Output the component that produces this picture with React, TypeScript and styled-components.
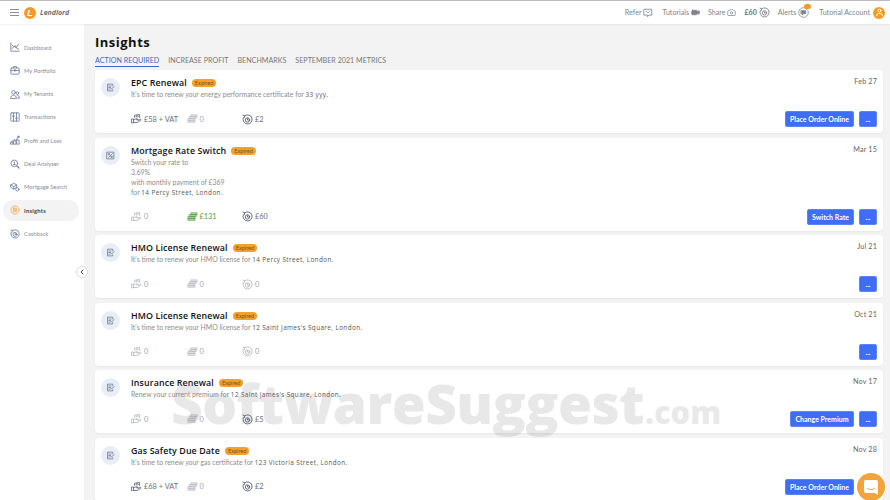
import React from "react";
import styled, { createGlobalStyle } from "styled-components";
import { Video, Camera, ChevronLeft, User } from "lucide-react";

const Global = createGlobalStyle`
  html, body { margin: 0; padding: 0; height: 500px; overflow: hidden; background: #f3f3f3; }
  body { font-family: "Lato", "Liberation Sans", sans-serif; }
  * { box-sizing: border-box; }
`;

const Page = styled.div`position: relative; width: 890px; height: 500px; overflow: hidden; display: flex; flex-direction: column; background: #f3f3f3;`;
const TopBar = styled.header`
  height: 24px; flex: none; background: #fff; border-top: 1px solid #bdbdbd; display: flex; align-items: center;
  padding: 0 5px 0 10px; box-shadow: 0 1px 2px rgba(0,0,0,.06); z-index: 2; color: #767c88;
`;
const Burger = styled.span`
  width: 9px; height: 7px; margin-right: 5px; border-top: 1px solid #8a8e96; border-bottom: 1px solid #8a8e96; position: relative;
  &::after { content: ""; position: absolute; left: 0; right: 0; top: 2px; height: 1px; background: #8a8e96; }
`;
const LogoDot = styled.span`
  width: 12px; height: 12px; border-radius: 50%; background: #f59a23; color: #fff; display: flex; align-items: center; justify-content: center;
  font: italic 700 9px "Liberation Sans", sans-serif; margin-right: 4px;
`;
const LogoText = styled.span`font: italic 700 7px "Open Sans", sans-serif; color: #6e7278;`;
const TopNav = styled.nav`margin-left: auto; display: flex; align-items: center; font-size: 7.1px; color: #7f838b;`;
const TopItem = styled.span<{ $gap: number }>`display: flex; align-items: center; gap: 2px; margin-right: ${p => p.$gap}px; position: relative;`;
const Strong = styled.span`font-weight: 700; color: #6c7078;`;
const Bubble = styled.span`
  position: absolute; right: -2px; top: -3px; width: 7px; height: 5px; border-radius: 3px; background: #f59a23;
`;
const Avatar = styled.span`
  width: 12px; height: 12px; border-radius: 50%; background: #f59a23; display: flex; align-items: center; justify-content: center; color: #fff; margin-left: 1px;
`;

const Body = styled.div`flex: 1; display: flex; min-height: 0;`;
const Side = styled.aside`width: 84px; flex: none; background: #fff; padding: 12.5px 5px 0 3px; display: flex; flex-direction: column; gap: 2.33px;`;
const SideItem = styled.div<{ $active?: boolean }>`
  height: 21px; border-radius: 10px; display: flex; align-items: center; gap: 4px; padding-left: 7px; font-size: 5.8px;
  color: ${p => p.$active ? "#444" : "#868c98"}; font-weight: ${p => p.$active ? 700 : 400};
  background: ${p => p.$active ? "#f3f3f3" : "transparent"};
  letter-spacing: ${p => p.$active ? ".25px" : "0"};
  svg { color: ${p => p.$active ? "#f2a04a" : "#6c7d9e"}; flex: none; }
`;
const Collapse = styled.button`
  position: absolute; left: 76px; top: 266px; width: 12px; height: 12px; border-radius: 50%; background: #fff; border: 1px solid #ddd; padding: 0;
  display: flex; align-items: center; justify-content: center; color: #444; z-index: 3;
`;

const Main = styled.main`flex: 1; padding: 11px 7px 0 11px; min-width: 0;`;
const Title = styled.h1`margin: 0; font: 700 13px/15px "Open Sans", sans-serif; letter-spacing: .5px; color: #111; height: 15px;`;
const Tabs = styled.div`display: flex; gap: 9px; margin-top: 4.5px; height: 15.5px;`;
const Tab = styled.span<{ $active?: boolean }>`
  font-size: 7.1px; line-height: 11px; height: 12px; color: ${p => p.$active ? "#3d66c9" : "#777"}; letter-spacing: .03px;
  border-bottom: ${p => p.$active ? "1px solid #3d66c9" : "0"}; white-space: nowrap;
`;
const List = styled.div`display: flex; flex-direction: column; gap: 4.5px;`;
const Card = styled.article`
  background: #fff; border-radius: 4px; padding: 7px 6px 6px; display: grid; grid-template-columns: 19px 1fr; column-gap: 11px; flex: none;
  box-shadow: 0 1px 2px rgba(0,0,0,.05);
`;
const Round = styled.span`
  width: 19px; height: 19px; border-radius: 50%; background: #e9eef6; display: flex; align-items: center; justify-content: center; color: #65748f; margin-top: 1px;
`;
const Content = styled.div`min-width: 0;`;
const Head = styled.div`display: flex; align-items: center; height: 12px;`;
const CardTitle = styled.h2`margin: 0; font: 600 8.85px/12px "Open Sans", sans-serif; color: #111; letter-spacing: .12px; white-space: nowrap;`;
const Badge = styled.span`
  margin-left: 5px; height: 8px; padding: 0 3px; border-radius: 4px; background: #f5a02c; color: #7a5520; font-size: 5.6px; line-height: 8px;
`;
const DateText = styled.span`margin-left: auto; align-self: flex-start; font-size: 7.2px; line-height: 9px; color: #666; letter-spacing: .15px;`;
const Desc = styled.p`margin: 0; height: 10px; font-size: 6.9px; line-height: 10px; color: #8d8d8d; white-space: nowrap;`;
const Addr = styled.span`font-family: "Open Sans", sans-serif; font-size: 6.35px; line-height: 1; color: #555; letter-spacing: .4px;`;
const Foot = styled.div`display: flex; align-items: center; margin-top: 12px; height: 16px;`;
const Metrics = styled.div`display: grid; grid-template-columns: 55.5px 55.5px auto;`;
const Metric = styled.span<{ $tone: "on" | "off" | "green" }>`
  display: flex; align-items: center; gap: 2px; font-size: 7.4px;
  color: ${p => p.$tone === "green" ? "#5c9c3e" : p.$tone === "on" ? "#6c7079" : "#a4a6aa"};
  svg { color: ${p => p.$tone === "green" ? "#4f9a3c" : p.$tone === "on" ? "#5a6270" : "#b7bac0"}; }
`;
const Actions = styled.div`margin-left: auto; display: flex; gap: 5px;`;
const Btn = styled.button<{ $w: number }>`
  width: ${p => p.$w}px; height: 16px; padding: 0; border-radius: 2px; border: 1px solid #5c84f7; background: #3f6df6; color: #fff;
  font: 700 7px/14px "Lato", sans-serif; white-space: nowrap;
`;

const Watermark = styled.div`
  position: absolute; left: 171px; top: 373px; font: 800 55px/60px "Open Sans", sans-serif; color: rgba(120,120,120,.17); white-space: nowrap; letter-spacing: -.6px; pointer-events: none; z-index: 4;
`;
const Dot = styled.span`font-size: 31px; letter-spacing: 0; margin-left: 1px;`;
const Chat = styled.div`
  position: absolute; left: 857px; top: 473px; width: 28px; height: 28px; border-radius: 50%; background: #f3a33b; display: flex; align-items: center; justify-content: center; z-index: 5;
`;

type IP = { size?: number };
const Svg = ({ size = 10, w = 12, h = 12, sw = 1, children }: { size?: number; w?: number; h?: number; sw?: number; children: React.ReactNode }) => (
  <svg width={size} height={size * h / w} viewBox={`0 0 ${w} ${h}`} fill="none" stroke="currentColor" strokeWidth={sw} strokeLinecap="round" strokeLinejoin="round" aria-hidden="true">{children}</svg>
);
const IcDash = ({ size }: IP) => <Svg size={size}><path d="M1 1v10h10" /><path d="M2.5 8l2.5-3 2 2 3.5-4.5" /><path d="M2.5 4l2 1.5 2-1 1.5 3 2.5 1" /></Svg>;
const IcCase = ({ size }: IP) => <Svg size={size}><rect x="1" y="3.5" width="10" height="7.5" rx="1" /><path d="M4.2 3.5V2h3.6v1.5M1 6.5h10" /><circle cx="6" cy="6.5" r="1" /></Svg>;
const IcUsers = ({ size }: IP) => <Svg size={size}><circle cx="4.2" cy="4" r="2.2" /><path d="M.8 11c0-2.5 1.5-3.5 3.4-3.5S7.6 8.5 7.6 11z" /><circle cx="8.8" cy="5" r="1.6" /><path d="M9 8h.5c1 0 1.7.8 1.7 3H9" /></Svg>;
const IcTrans = ({ size }: IP) => <Svg size={size}><rect x="1" y="1" width="10" height="10" rx=".8" /><path d="M4.2 1v10M7.8 1v10M3 5h2.4M6.6 7.5H9" /></Svg>;
const IcPnl = ({ size }: IP) => <Svg size={size}><path d="M1.5 8.5L5 5.5l2 1 3-4" /><circle cx="10" cy="2.2" r="1" /><rect x="1" y="8.5" width="2.5" height="2.5" /><rect x="4.7" y="7" width="2.5" height="4" /><rect x="8.4" y="6" width="2.5" height="5" /></Svg>;
const IcDeal = ({ size }: IP) => <Svg size={size}><circle cx="5.2" cy="5.2" r="4" /><path d="M8.2 8.2L11 11" strokeWidth="1.5" /><path d="M5.2 3.2v3.4M4 6.8h2.4" /></Svg>;
const IcSearch = ({ size }: IP) => <Svg size={size}><path d="M1 3.5L4.5 1.5 8 3.5v3L4.5 8.5 1 6.5z" /><path d="M1 3.5l3.5 2 3.5-2M4.5 5.5v3" /><circle cx="8.8" cy="8.8" r="2" /></Svg>;
const IcInsight = ({ size }: IP) => <Svg size={size} sw={.9}><circle cx="6" cy="6" r="4.9" strokeDasharray="2.4 1" /><rect x="4" y="3.8" width="4" height="4.4" rx=".6" /><path d="M5.2 5h1.6M5.2 6.6h1.6" /></Svg>;
const IcClock = ({ size }: IP) => <Svg size={size}><path d="M3 1.9A5 5 0 1 1 1.4 4" /><path d="M1 1.2l2 .7-.5 2" /><circle cx="6" cy="6.5" r="2.4" /><path d="M6 5.2v1.4h1.1" /></Svg>;
const IcDoc = ({ size }: IP) => <Svg size={size}><path d="M9 4V1.5H2v9h7V9" /><path d="M3.8 4h3M3.8 6h2M3.8 8h2" /><path d="M6.5 6.5l1.2 1.2L11 4.8" /></Svg>;
const IcPct = ({ size }: IP) => <Svg size={size}><rect x="1.5" y="1.5" width="9" height="9" /><path d="M3.5 8.5l5-5" /><path d="M3.5 3.6h1.4V5H3.5zM7.1 7h1.4v1.4H7.1z" /></Svg>;
const IcHand = ({ size }: IP) => <Svg size={size} w={13} h={11}><path d="M1 6h2v4.5H1z" /><path d="M3 7l2.5-1.2h2.2l1 1H6.4" /><path d="M3 10h4.8l4.2-3.2c-.6-.7-1.3-.6-1.9-.2L8.4 7.6" /><path d="M4.2 4V1.5l6-1v3.6" /><path d="M6.2 3.5a1.2 1.2 0 1 1 2.2 0" /></Svg>;
const IcStack = ({ size }: IP) => <Svg size={size} w={13} h={11}><path d="M5 1h7v2H5zM3 3.2h8v2H3zM1.5 5.5h8v2h-8zM1.5 7.8h8v2h-8z" fill="currentColor" fillOpacity=".35" strokeWidth=".8" /></Svg>;
const IcChat = ({ size }: IP) => <Svg size={size}><path d="M1.5 1.5h9v7H7L5.5 10.5V8.5h-4z" /><path d="M4 3.8c0 2.4 4 2.4 4 0" /></Svg>;
const IcAlert = ({ size }: IP) => <Svg size={size} sw={.9}><circle cx="6" cy="6" r="5.2" strokeDasharray="2 1" /><path d="M3.6 4h4.8v3.4H6L4.6 8.6V7.4h-1z" fill="currentColor" /></Svg>;

const nav: [React.ComponentType<IP>, string][] = [
  [IcDash, "Dashboard"], [IcCase, "My Portfolio"], [IcUsers, "My Tenants"], [IcTrans, "Transactions"],
  [IcPnl, "Profit and Loss"], [IcDeal, "Deal Analyser"], [IcSearch, "Mortgage Search"], [IcInsight, "Insights"], [IcClock, "Cashback"],
];

type M = { v: string; tone: "on" | "off" | "green" };
type C = { title: string; lines: React.ReactNode[]; date: string; a: M; b: M; c: M; btn?: [string, number]; Icon?: React.ComponentType<IP> };
const on = (v: string): M => ({ v, tone: "on" });
const off: M = { v: "0", tone: "off" };

const cards: C[] = [
  { title: "EPC Renewal", lines: [<>It's time to renew your energy performance certificate for <Addr>33 yyy.</Addr></>], date: "Feb 27", a: on("£58 + VAT"), b: off, c: on("£2"), btn: ["Place Order Online", 69] },
  { title: "Mortgage Rate Switch", lines: ["Switch your rate to", "3.69%", "with monthly payment of £369", <>for <Addr>14 Percy Street, London.</Addr></>], date: "Mar 15", a: off, b: { v: "£131", tone: "green" }, c: on("£60"), btn: ["Switch Rate", 47], Icon: IcPct },
  { title: "HMO License Renewal", lines: [<>It's time to renew your HMO license for <Addr>14 Percy Street, London.</Addr></>], date: "Jul 21", a: off, b: off, c: off },
  { title: "HMO License Renewal", lines: [<>It's time to renew your HMO license for <Addr>12 Saint James's Square, London.</Addr></>], date: "Oct 21", a: off, b: off, c: off },
  { title: "Insurance Renewal", lines: [<>Renew your current premium for <Addr>12 Saint James's Square, London.</Addr></>], date: "Nov 17", a: off, b: off, c: on("£5"), btn: ["Change Premium", 64] },
  { title: "Gas Safety Due Date", lines: [<>It's time to renew your gas certificate for <Addr>123 Victoria Street, London.</Addr></>], date: "Nov 28", a: on("£68 + VAT"), b: off, c: on("£2"), btn: ["Place Order Online", 69] },
];

export default function App() {
  return (
    <Page>
      <Global />
      <TopBar>
        <Burger />
        <LogoDot>L</LogoDot>
        <LogoText>Lendlord</LogoText>
        <TopNav>
          <TopItem $gap={9}>Refer <IcChat size={10} /></TopItem>
          <TopItem $gap={8}>Tutorials <Video size={9} fill="currentColor" /></TopItem>
          <TopItem $gap={8}>Share <Camera size={9} /></TopItem>
          <TopItem $gap={8}><Strong>£60</Strong> <IcClock size={11} /></TopItem>
          <TopItem $gap={10}>Alerts <IcAlert size={11} /><Bubble /></TopItem>
          <TopItem $gap={0}>Tutorial Account <Avatar><User size={9} strokeWidth={2.5} /></Avatar></TopItem>
        </TopNav>
      </TopBar>
      <Body>
        <Side>
          {nav.map(([I, label]) => (
            <SideItem key={label} $active={label === "Insights"}><I size={10} />{label}</SideItem>
          ))}
        </Side>
        <Main>
          <Title>Insights</Title>
          <Tabs>
            <Tab $active>ACTION REQUIRED</Tab>
            <Tab>INCREASE PROFIT</Tab>
            <Tab>BENCHMARKS</Tab>
            <Tab>SEPTEMBER 2021 METRICS</Tab>
          </Tabs>
          <List>
            {cards.map((c, i) => {
              const I = c.Icon ?? IcDoc;
              return (
                <Card key={i}>
                  <Round><I size={9} /></Round>
                  <Content>
                    <Head>
                      <CardTitle>{c.title}</CardTitle>
                      <Badge>Expired</Badge>
                      <DateText>{c.date}</DateText>
                    </Head>
                    {c.lines.map((l, j) => <Desc key={j}>{l}</Desc>)}
                    <Foot>
                      <Metrics>
                        <Metric $tone={c.a.tone}><IcHand size={11} />{c.a.v}</Metric>
                        <Metric $tone={c.b.tone}><IcStack size={11} />{c.b.v}</Metric>
                        <Metric $tone={c.c.tone}><IcClock size={11} />{c.c.v}</Metric>
                      </Metrics>
                      <Actions>
                        {c.btn && <Btn $w={c.btn[1]}>{c.btn[0]}</Btn>}
                        <Btn $w={18}>...</Btn>
                      </Actions>
                    </Foot>
                  </Content>
                </Card>
              );
            })}
          </List>
        </Main>
      </Body>
      <Collapse aria-label="collapse"><ChevronLeft size={8} strokeWidth={3} /></Collapse>
      <Watermark>SoftwareSuggest<Dot>.com</Dot></Watermark>
      <Chat>
        <svg width="14" height="15" viewBox="0 0 14 15" aria-hidden="true">
          <path d="M2 0h10a2 2 0 0 1 2 2v13l-3.5-2H2a2 2 0 0 1-2-2V2a2 2 0 0 1 2-2z" fill="#fff" />
          <path d="M3.5 8.5c2 1.5 5 1.5 7 0" stroke="#f3a33b" strokeWidth="1" fill="none" strokeLinecap="round" />
        </svg>
      </Chat>
    </Page>
  );
}
